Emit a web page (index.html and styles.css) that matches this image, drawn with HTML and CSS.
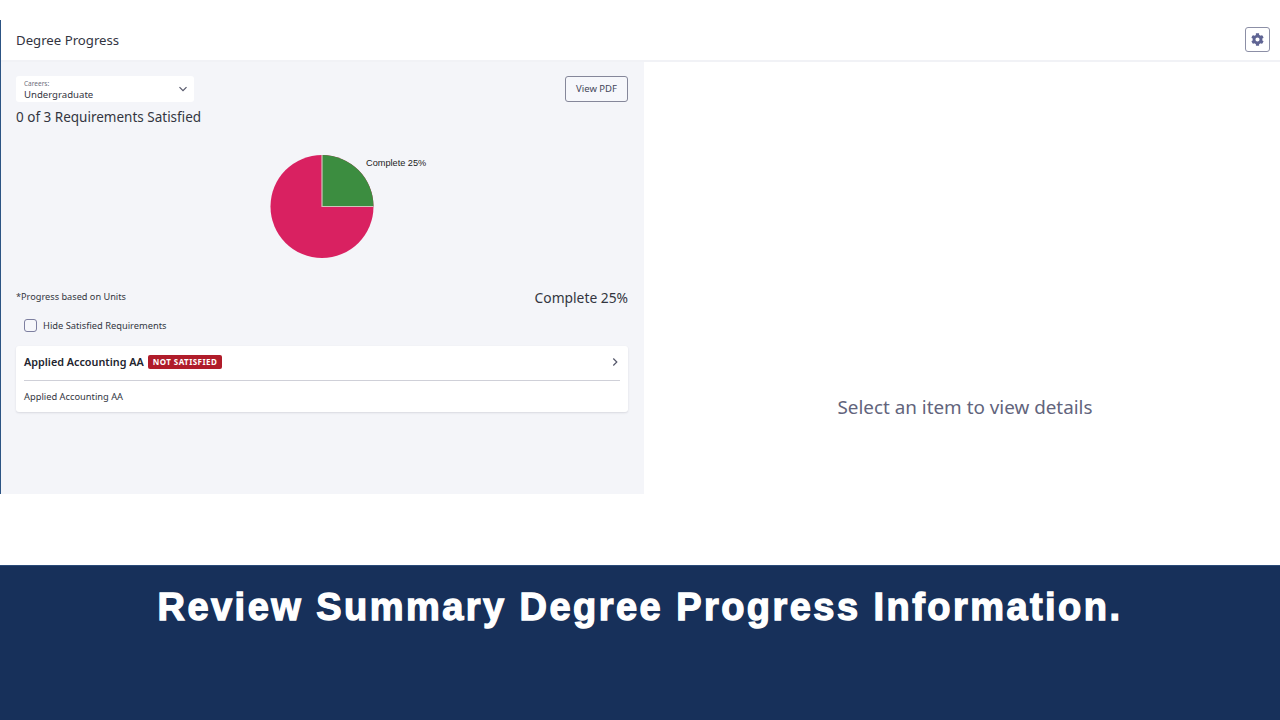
FILE: index.html
```html
<!DOCTYPE html>
<html lang="en">
<head>
<meta charset="utf-8">
<title>Degree Progress</title>
<link rel="stylesheet" href="styles.css">
</head>
<body>
<div class="page">
  <main class="app">
    <header class="app-header">
      <h1 class="app-title">Degree Progress</h1>
      <button class="gear-btn" aria-label="Settings">
        <svg class="gear-icon" viewBox="0 0 512 512"><path d="M487.4 315.7l-42.6-24.6c4.3-23.2 4.3-47 0-70.2l42.6-24.6c4.9-2.8 7.1-8.6 5.5-14-11.1-35.6-30-67.8-54.7-94.6-3.8-4.1-10-5.1-14.8-2.3L380.8 110c-17.9-15.4-38.5-27.3-60.8-35.1V25.8c0-5.6-3.9-10.5-9.4-11.7-36.7-8.2-74.3-7.8-109.2 0-5.5 1.2-9.4 6.1-9.4 11.7V75c-22.2 7.9-42.8 19.8-60.8 35.1L88.7 85.5c-4.9-2.8-11-1.9-14.8 2.3-24.7 26.7-43.6 58.9-54.7 94.6-1.7 5.4.6 11.2 5.5 14L67.3 221c-4.3 23.2-4.3 47 0 70.2l-42.6 24.6c-4.9 2.8-7.1 8.6-5.5 14 11.1 35.6 30 67.8 54.7 94.6 3.8 4.1 10 5.1 14.8 2.3l42.6-24.6c17.9 15.4 38.5 27.3 60.8 35.1v49.2c0 5.6 3.9 10.5 9.4 11.7 36.7 8.2 74.3 7.8 109.2 0 5.5-1.2 9.4-6.1 9.4-11.7v-49.2c22.2-7.9 42.8-19.8 60.8-35.1l42.6 24.6c4.9 2.8 11 1.9 14.8-2.3 24.7-26.7 43.6-58.9 54.7-94.6 1.5-5.5-.7-11.3-5.6-14.1zM256 336c-44.1 0-80-35.9-80-80s35.9-80 80-80 80 35.9 80 80-35.9 80-80 80z"/></svg>
      </button>
    </header>
    <div class="panes">
      <section class="summary">
        <div class="top-row">
          <div class="select">
            <div class="select-text">
              <span class="select-label">Careers:</span>
              <span class="select-value">Undergraduate</span>
            </div>
            <svg class="select-caret" viewBox="0 0 12 12"><path d="M2.5 4.2 6 7.7l3.5-3.5"/></svg>
          </div>
          <button class="pdf-btn">View PDF</button>
        </div>
        <p class="req-count">0 of 3 Requirements Satisfied</p>
        <div class="chart">
          <svg class="pie" viewBox="0 0 105 105">
            <circle class="pie-rest" cx="52" cy="52.5" r="51.5"/>
            <path class="pie-done" d="M52 52.5V1A51.5 51.5 0 0 1 103.5 52.5Z"/>
            <path class="pie-edge" d="M52 1V52.5H103.5"/>
          </svg>
          <span class="pie-label">Complete 25%</span>
        </div>
        <div class="progress-row">
          <span class="progress-note">*Progress based on Units</span>
          <span class="progress-value">Complete 25%</span>
        </div>
        <label class="hide-row">
          <span class="checkbox"></span>
          <span class="hide-text">Hide Satisfied Requirements</span>
        </label>
        <article class="req-card">
          <div class="req-head">
            <span class="req-name">Applied Accounting AA</span>
            <span class="badge">NOT SATISFIED</span>
            <svg class="req-chevron" viewBox="0 0 12 12"><path d="M4.3 2.5 7.8 6l-3.5 3.5"/></svg>
          </div>
          <p class="req-desc">Applied Accounting AA</p>
        </article>
      </section>
      <section class="details">
        <p class="details-empty">Select an item to view details</p>
      </section>
    </div>
  </main>
  <footer class="banner">
    <p class="banner-text">Review Summary Degree Progress Information.</p>
  </footer>
</div>
</body>
</html>
```
FILE: styles.css
```css
* { box-sizing: border-box; }
html, body { margin: 0; padding: 0; background: #fff; }
body { font-family: "Noto Sans", "Liberation Sans", sans-serif; color: #2b2d3a; }
.page { width: 1280px; height: 720px; display: flex; flex-direction: column; overflow: hidden; }
.app { margin-top: 20px; height: 474px; display: flex; flex-direction: column; border-left: 1px solid #2c5484; }
.app-header { height: 42px; flex: none; display: flex; align-items: center; justify-content: space-between; padding: 0 10px 0 15px; border-bottom: 2px solid #f1f2f6; }
.app-title { margin: 0; font-size: 13.2px; font-weight: 400; color: #33353f; }
.gear-btn { width: 25px; height: 25px; padding: 0; display: flex; align-items: center; justify-content: center; background: #fff; border: 1px solid #8c8fa6; border-radius: 3px; margin-top: -1px; }
.gear-icon { width: 13px; height: 13px; fill: #5f6493; }
.panes { flex: 1; display: flex; min-height: 0; }
.summary { width: 643px; flex: none; background: #f4f5f9; padding: 14px 16px 0 15px; }
.top-row { display: flex; justify-content: space-between; align-items: flex-start; }
.select { width: 178px; height: 26px; background: #fff; border-radius: 3px; display: flex; align-items: center; justify-content: space-between; padding: 0 5px 0 8px; }
.select-text { display: flex; flex-direction: column; padding-top: 4px; }
.select-label { font-size: 6.5px; line-height: 8px; color: #6d6f7c; }
.select-value { font-size: 9.6px; line-height: 14px; color: #33353f; }
.select-caret { width: 12px; height: 12px; fill: none; stroke: #55576a; stroke-width: 1.2; }
.pdf-btn { width: 63px; height: 26px; padding: 0 0 2px; font: 400 9.5px "Noto Sans", sans-serif; color: #44465a; background: #f6f7fb; border: 1px solid #85879a; border-radius: 3px; }
.req-count { margin: 5px 0 0; font-size: 13.5px; line-height: 20px; color: #33353f; }
.chart { position: relative; height: 105px; margin-top: 27px; display: flex; justify-content: center; }
.pie { width: 105px; height: 105px; }
.pie-rest { fill: #d92161; }
.pie-done { fill: #3c8d40; }
.pie-edge { fill: none; stroke: #cfc4ba; stroke-width: 1.2; }
.pie-label { position: absolute; left: 350px; top: 4px; font: 400 9.2px/11px "Liberation Sans", Arial, sans-serif; color: #222; }
.progress-row { margin-top: 27px; display: flex; justify-content: space-between; align-items: center; height: 24px; }
.progress-note { font-size: 9.2px; color: #33353f; margin-top: -3px; }
.progress-value { font-size: 13.8px; color: #33353f; margin-top: -2px; }
.hide-row { display: flex; align-items: center; gap: 6px; margin: 5px 0 0 8px; height: 20px; }
.checkbox { width: 13px; height: 13px; border: 1.5px solid #7d7fa0; border-radius: 3px; background: #f6f7fb; }
.hide-text { font-size: 9.3px; color: #33353f; }
.req-card { margin-top: 11px; height: 66px; background: #fff; border-radius: 3px; box-shadow: 0 1px 2px rgba(60,60,90,.15); padding: 0 8px; }
.req-head { height: 35px; padding-bottom: 3px; display: flex; align-items: center; gap: 4px; border-bottom: 1px solid #cfd0d8; }
.req-name { font-size: 10.8px; font-weight: 600; color: #22242e; }
.badge { background: #b01c2a; color: #fff; font-size: 8px; font-weight: 700; line-height: 14px; padding: 0 5px; border-radius: 2px; letter-spacing: .45px; }
.req-chevron { width: 12px; height: 12px; margin-left: auto; margin-right: -1px; fill: none; stroke: #55576a; stroke-width: 1.2; }
.req-desc { margin: 9px 0 0; font-size: 9.3px; line-height: 14px; color: #33353f; }
.details { flex: 1; display: flex; justify-content: center; padding-top: 332px; }
.details-empty { margin: 0 0 0 6px; font-size: 18.85px; line-height: 26px; color: #62647c; }
.banner { margin-top: 71px; flex: 1; background: #17305a; border-top: 1px solid #2a4a78; padding-top: 17px; }
.banner-text { margin: 0; text-align: center; font: 700 38px/48px "Liberation Sans", Arial, sans-serif; letter-spacing: 2.45px; color: #fff; -webkit-text-stroke: 1.3px #fff; }
```
